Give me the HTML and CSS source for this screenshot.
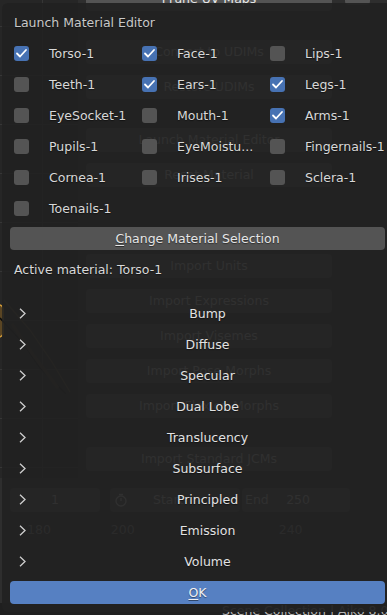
FILE: index.html
```html
<!DOCTYPE html>
<html lang="en">
<head>
  <meta charset="UTF-8" />
  <meta name="viewport" content="width=device-width, initial-scale=1.0"/>
  <title>Launch Material Editor</title>
  <link rel="stylesheet" href="styles.css">
</head>
<body>
  <!-- blender window behind the popup -->
  <div class="backdrop">
    <div class="upper">
      <div class="viewport">
        <svg class="stroke" width="78" height="478" viewBox="0 0 78 478">
          <rect x="-7" y="305" width="10" height="32" rx="4" fill="#5a4523" stroke="#d9a03a" stroke-width="1.5"/>
          <path d="M0 318 L22 342 L40 368 L66 394" fill="none" stroke="#0c0c0c" stroke-width="1.6"/>
          <path d="M4 300 L30 330 L52 362 L70 392" fill="none" stroke="#5a4a2c" stroke-width="1.2"/>
          <path d="M12 324 L34 356 L58 388" fill="none" stroke="#3b3224" stroke-width="3"/>
        </svg>
      </div>
      <div class="sidebar">
        <div class="bbtn first">Prune UV Maps</div>
        <div class="bbtn gap-m">Convert to UDIMs</div>
        <div class="bbtn gap-s">Restore UDIMs</div>
        <div class="bbtn gap-m">Launch Material Editor</div>
        <div class="bbtn gap-s">Reset Material</div>
        <div class="bbtn gap-l">Import Units</div>
        <div class="bbtn gap-s">Import Expressions</div>
        <div class="bbtn gap-s">Import Visemes</div>
        <div class="bbtn gap-s">Import Pose Morphs</div>
        <div class="bbtn gap-s">Import Flexion Morphs</div>
        <div class="bbtn gap-m">Import Standard JCMs</div>
      </div>
      <div class="corner-btn"></div>
    </div>
    <div class="timeline">
      <div class="trow">
        <div class="tfield frame">1</div>
        <div class="tfield watch">
          <svg width="14" height="14" viewBox="0 0 14 14"><circle cx="7" cy="8" r="5" fill="none" stroke="#e6e6e6" stroke-width="1.3"/><path d="M7 8 L7 5 M5 1.5 H9" stroke="#e6e6e6" stroke-width="1.3"/></svg>
        </div>
        <div class="tfield start">Start</div>
        <div class="tfield end"><span>End</span><span>250</span></div>
      </div>
      <div class="ticks">
        <span class="t180">180</span>
        <span class="t200">200</span>
        <span class="t240">240</span>
      </div>
      <div class="status">Scene Collection | Aiko 8.0 | Verts</div>
    </div>
  </div>

  <div class="dialog">
    <div class="title">Launch Material Editor</div>

    <div class="checks">
      <label class="check"><span class="box on"></span>Torso-1</label>
      <label class="check"><span class="box on"></span>Face-1</label>
      <label class="check"><span class="box"></span>Lips-1</label>
      <label class="check"><span class="box"></span>Teeth-1</label>
      <label class="check"><span class="box on"></span>Ears-1</label>
      <label class="check"><span class="box on"></span>Legs-1</label>
      <label class="check"><span class="box"></span>EyeSocket-1</label>
      <label class="check"><span class="box"></span>Mouth-1</label>
      <label class="check"><span class="box on"></span>Arms-1</label>
      <label class="check"><span class="box"></span>Pupils-1</label>
      <label class="check"><span class="box"></span>EyeMoistu...</label>
      <label class="check"><span class="box"></span>Fingernails-1</label>
      <label class="check"><span class="box"></span>Cornea-1</label>
      <label class="check"><span class="box"></span>Irises-1</label>
      <label class="check"><span class="box"></span>Sclera-1</label>
      <label class="check"><span class="box"></span>Toenails-1</label>
    </div>

    <div class="wide-btn"><u>C</u>hange Material Selection</div>
    <div class="active">Active material: Torso-1</div>

    <div class="panels">
      <div class="panel"><span class="chev"></span><span class="name">Bump</span></div>
      <div class="panel"><span class="chev"></span><span class="name">Diffuse</span></div>
      <div class="panel"><span class="chev"></span><span class="name">Specular</span></div>
      <div class="panel"><span class="chev"></span><span class="name">Dual Lobe</span></div>
      <div class="panel"><span class="chev"></span><span class="name">Translucency</span></div>
      <div class="panel"><span class="chev"></span><span class="name">Subsurface</span></div>
      <div class="panel"><span class="chev"></span><span class="name">Principled</span></div>
      <div class="panel"><span class="chev"></span><span class="name">Emission</span></div>
      <div class="panel"><span class="chev"></span><span class="name">Volume</span></div>
    </div>

    <div class="wide-btn ok"><u>O</u>K</div>
  </div>

  <script>
    // tick marks and chevrons are the same svg everywhere
    const tick = '<svg width="15" height="15" viewBox="0 0 15 15"><polyline points="3,7.5 6,10.5 12,4" fill="none" stroke="#fff" stroke-width="1.8" stroke-linecap="round" stroke-linejoin="round"/></svg>';
    const chev = '<svg width="7" height="11" viewBox="0 0 7 11"><polyline points="1,0.8 6,5.5 1,10.2" fill="none" stroke="#cfcfcf" stroke-width="1.3"/></svg>';

    document.querySelectorAll(".box.on").forEach(b => b.innerHTML = tick);
    document.querySelectorAll(".chev").forEach(c => c.innerHTML = chev);
  </script>
</body>
</html>
```

FILE: styles.css
```css
* {
  box-sizing: border-box;
}

body {
  margin: 0;
  width: 387px;
  height: 615px;
  overflow: hidden;
  position: relative;
  background: #1f1f1f;
  font-family: "DejaVu Sans", sans-serif;
  font-size: 12.5px;
  color: #dcdcdc;
}

/* ---------- window behind the popup ---------- */

.backdrop {
  height: 615px;
  display: flex;
  flex-direction: column;
}

.upper {
  display: flex;
  height: 478px;
  position: relative;
}

.viewport {
  width: 78px;
  position: relative;
  background-color: #262626;
  background-image:
    linear-gradient(to right, #363636 1px, transparent 1px),
    linear-gradient(to bottom, #363636 1px, transparent 1px);
  background-size: 49px 49px;
  background-position: 42px 26px;
}

.stroke {
  position: absolute;
  top: 0;
  left: 0;
}

.sidebar {
  flex: 1;
  padding-left: 8px;
  display: flex;
  flex-direction: column;
  background: #2e2e2e;
}

.bbtn {
  width: 246px;
  height: 24px;
  line-height: 24px;
  flex-shrink: 0;
  background: #545454;
  border-radius: 4px;
  color: #e6e6e6;
  text-align: center;
}

.bbtn.first { margin-top: -13px; }
.gap-s { margin-top: 11px; }
.gap-m { margin-top: 29px; }
.gap-l { margin-top: 67px; }

.corner-btn {
  position: absolute;
  top: -8px;
  left: 345px;
  width: 25px;
  height: 13px;
  background: #545454;
  border-radius: 4px;
}

.timeline {
  flex: 1;
  display: flex;
  flex-direction: column;
  background: #2e2e2e;
  color: #e6e6e6;
}

.trow {
  display: flex;
  margin-top: 10px;
  padding-left: 10px;
  height: 24px;
}

.tfield {
  height: 24px;
  line-height: 24px;
  background: #545454;
  border-radius: 4px;
}

.frame { width: 90px; text-align: center; }
.watch { width: 22px; margin-left: 10px; display: flex; align-items: center; justify-content: center; border-radius: 4px 0 0 4px; }
.start { width: 108px; padding-left: 21px; border-radius: 0 4px 4px 0; }
.end { width: 108px; margin-left: 2px; padding: 0 40px 0 3px; display: flex; justify-content: space-between; }

.ticks {
  display: flex;
  margin-top: 10px;
  height: 16px;
  line-height: 16px;
  color: #a0a0a0;
}

.t180 { margin-left: 27px; }
.t200 { margin-left: 60px; }
.t240 { margin-left: 144px; }

.status {
  margin-top: auto;
  height: 12px;
  line-height: 16px;
  padding-left: 222px;
  overflow: hidden;
  white-space: nowrap;
  color: #b4b4b4;
  background: #1f1f1f;
}

/* ---------- popup ---------- */

.dialog {
  position: absolute;
  top: 3px;
  left: 2px;
  width: 391px;
  height: 609px;
  padding: 4px 8px 0 8px;
  border-radius: 6px;
  background: rgba(33, 33, 33, 0.93);
  text-shadow: 0 1px 1px rgba(0, 0, 0, 0.45);
}

.title {
  height: 31px;
  line-height: 31px;
  padding-left: 4px;
  color: #c8c8c8;
}

.checks {
  display: grid;
  grid-template-columns: repeat(3, 128px);
  grid-auto-rows: 31px;
  padding-left: 4px;
}

.check {
  display: flex;
  align-items: center;
  gap: 20px;
  white-space: nowrap;
  color: #d8d8d8;
}

.box {
  width: 15px;
  height: 15px;
  flex-shrink: 0;
  border-radius: 3px;
  background: #545454;
  display: flex;
}

.box.on {
  background: #4772b3;
}

.wide-btn {
  height: 23px;
  line-height: 23px;
  margin-top: 3px;
  background: #545454;
  border-radius: 4px;
  text-align: center;
  color: #e6e6e6;
}

.wide-btn u {
  text-underline-offset: 2px;
}

.active {
  height: 31px;
  line-height: 31px;
  margin-top: 4px;
  padding-left: 4px;
  color: #d8d8d8;
}

.panels {
  margin-top: 13px;
}

.panel {
  height: 31px;
  display: flex;
  align-items: center;
}

.chev {
  width: 20px;
  padding-left: 9px;
  display: flex;
}

.name {
  flex: 1;
  text-align: center;
  color: #e2e2e2;
}

.ok {
  margin-top: 4px;
  background: #5680c2;
  color: #f0f0f0;
}
```
